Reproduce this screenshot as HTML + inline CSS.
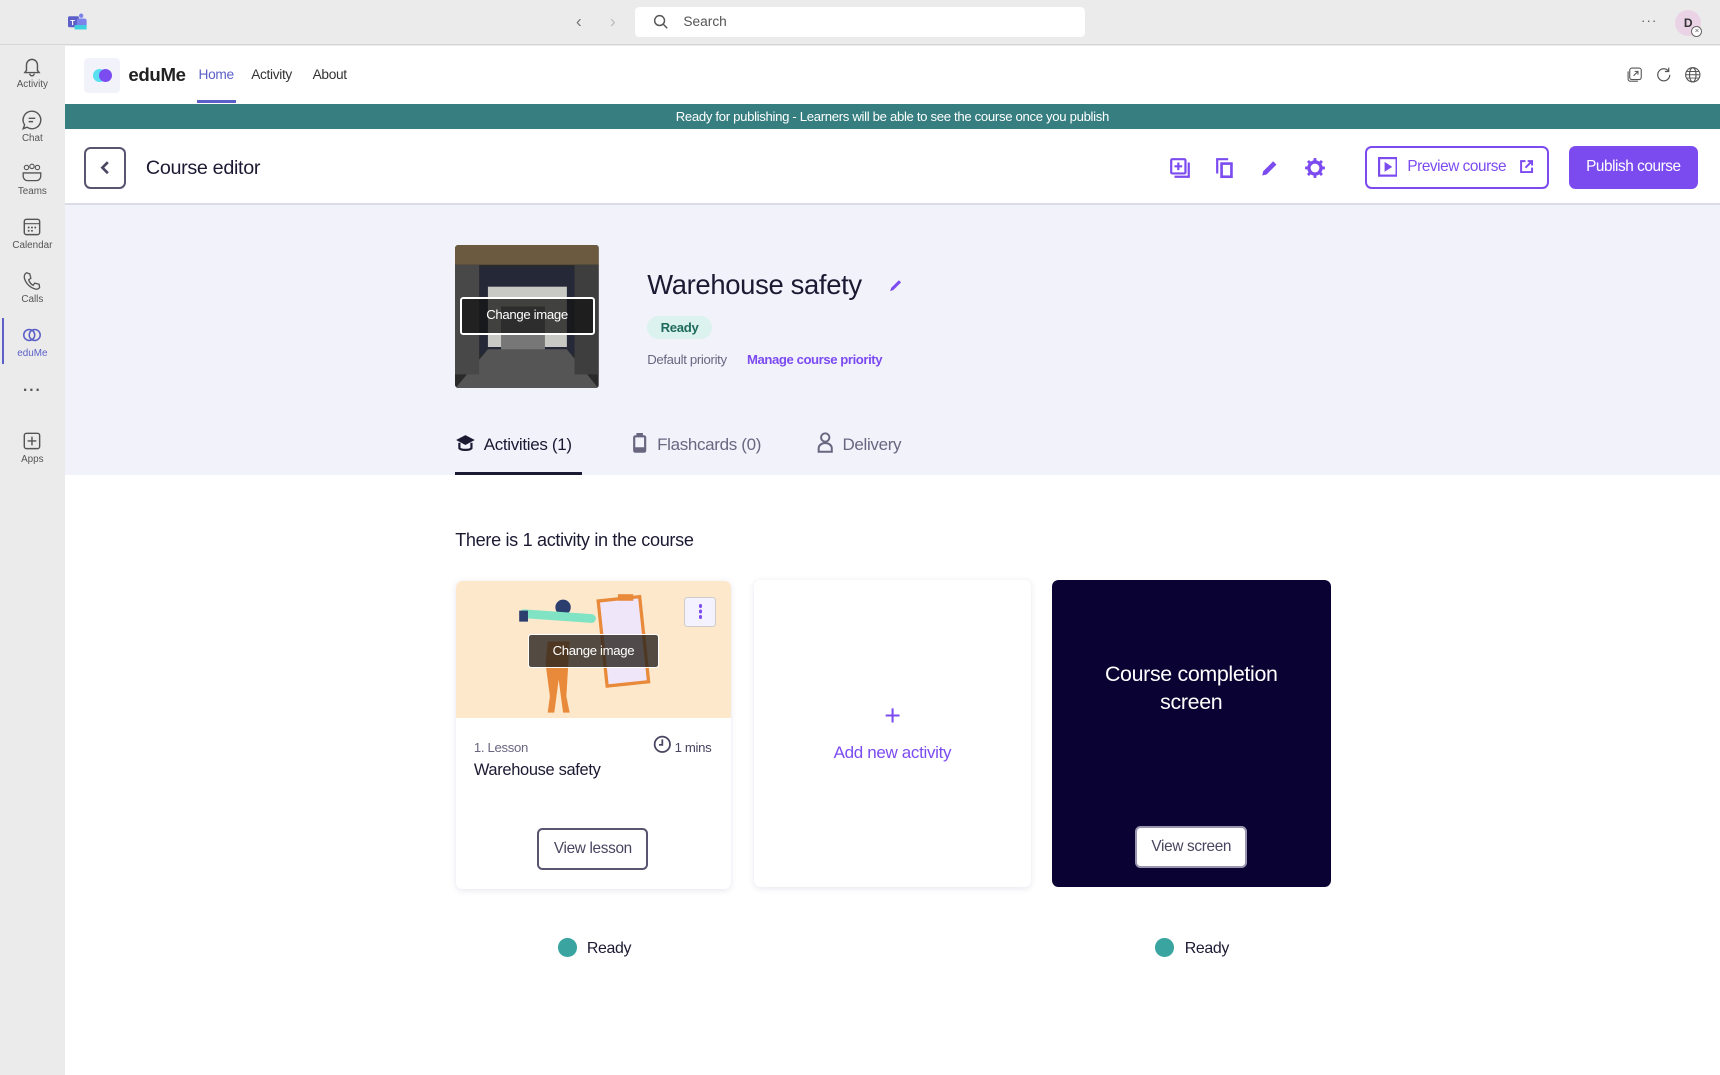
<!DOCTYPE html>
<html><head><meta charset="utf-8">
<style>
*{box-sizing:border-box;margin:0;padding:0}
html,body{width:1720px;height:1075px;overflow:hidden;background:#ebebeb}
#root{zoom:1.09694;width:1568px;height:980px;position:relative;font-family:"Liberation Sans",sans-serif;background:#ebebeb}
.abs{position:absolute}
.top{left:0;top:0;width:1568px;height:41px;background:#ebebeb;border-bottom:1px solid #d6d6d6}
.search{left:579px;top:6px;width:410px;height:28px;background:#fff;border-radius:4px;font-size:12.5px;color:#555;padding:7px 0 0 44px}
.rail{left:0;top:42px;width:59px;height:938px;background:#ebebeb}
.ri{position:absolute;left:0;width:59px;text-align:center;font-size:9px;color:#555}
.ri svg{display:block;margin:0 auto 2px}
.main{left:59px;top:42px;width:1509px;height:938px;background:#fff;letter-spacing:-0.3px}
.hdr{left:0;top:0;width:1509px;height:53px;background:#fff}
.banner{left:0;top:53px;width:1509px;height:23px;background:#367e80;color:#fff;font-size:12px;text-align:center;line-height:23px}
.edit{left:0;top:76px;width:1509px;height:69px;background:#fff;border-bottom:2px solid #dcdce6}
.gray{left:0;top:145px;width:1509px;height:246px;background:#f2f2fb}
.btn{border-radius:6px;font-size:14px;text-align:center}
.card{border-radius:6px;background:#fff;box-shadow:0 1px 6px rgba(60,60,120,.12)}
</style></head><body><div id="root">
<div class="abs top"></div>
<svg class="abs" style="left:62px;top:12px" width="18" height="16" viewBox="0 0 18 16"><rect x="0" y="3" width="10" height="10" rx="1.5" fill="#5b5fc7"/><rect x="8" y="5" width="9" height="8" rx="2" fill="#7b83eb"/><circle cx="12" cy="2.5" r="2" fill="#7b83eb"/><rect x="6" y="11" width="11" height="4" fill="#3fd0e0"/><text x="2" y="11" font-size="7" fill="#fff" font-family="Liberation Sans" font-weight="bold">T</text></svg>
<div class="abs" style="left:525px;top:10px;font-size:16px;color:#777">&#8249;</div>
<div class="abs" style="left:556px;top:10px;font-size:16px;color:#bbb">&#8250;</div>
<div class="abs search">Search</div>
<svg class="abs" style="left:595px;top:13px" width="14" height="14" viewBox="0 0 14 14"><circle cx="6" cy="6" r="4.5" fill="none" stroke="#555" stroke-width="1.3"/><path d="M9.5 9.5L13 13" stroke="#555" stroke-width="1.3"/></svg>
<div class="abs" style="left:1496px;top:12px;font-size:12px;color:#555;letter-spacing:1px">···</div>
<div class="abs" style="left:1527px;top:9px;width:24px;height:24px;border-radius:50%;background:#ebd3e6;font-size:11px;font-weight:bold;color:#333;text-align:center;line-height:24px">D</div>
<div class="abs" style="left:1542px;top:24px;width:10px;height:10px;border-radius:50%;background:#fff;border:1px solid #666;font-size:7px;line-height:8px;text-align:center;color:#555">×</div>
<div class="abs rail">
 <div class="ri" style="top:8px"><svg width="20" height="20" viewBox="0 0 20 20"><path d="M5 14V9a5 5 0 0110 0v5l1.5 2h-13z M8 17a2 2 0 004 0" fill="none" stroke="#555" stroke-width="1.3"/></svg>Activity</div>
 <div class="ri" style="top:57px"><svg width="20" height="20" viewBox="0 0 20 20"><path d="M10 2a8 8 0 11-4.5 14.6L2 18l1.3-3.5A8 8 0 0110 2z" fill="none" stroke="#555" stroke-width="1.3"/><path d="M7 8.5h6M7 11.5h4" stroke="#555" stroke-width="1.3"/></svg>Chat</div>
 <div class="ri" style="top:106px"><svg width="20" height="20" viewBox="0 0 20 20"><circle cx="5" cy="5" r="2" fill="none" stroke="#555"/><circle cx="10" cy="4" r="2" fill="none" stroke="#555"/><circle cx="15" cy="5" r="2" fill="none" stroke="#555"/><path d="M2 10h16v3a4 4 0 01-4 4H6a4 4 0 01-4-4z" fill="none" stroke="#555" stroke-width="1.2"/></svg>Teams</div>
 <div class="ri" style="top:155px"><svg width="20" height="20" viewBox="0 0 20 20"><rect x="3" y="3" width="14" height="14" rx="2" fill="none" stroke="#555" stroke-width="1.3"/><path d="M3 7h14" stroke="#555"/><circle cx="7" cy="10.5" r=".9" fill="#555"/><circle cx="10" cy="10.5" r=".9" fill="#555"/><circle cx="13" cy="10.5" r=".9" fill="#555"/><circle cx="7" cy="13.5" r=".9" fill="#555"/><circle cx="10" cy="13.5" r=".9" fill="#555"/></svg>Calendar</div>
 <div class="ri" style="top:204px"><svg width="20" height="20" viewBox="0 0 20 20"><path d="M5 2.5l3 1 1 4-2 1.5a9 9 0 004 5l1.5-2 4 1 .5 3c-1 1.5-3 2-5 1A14 14 0 013 7c-.3-2 .5-3.5 2-4.5z" fill="none" stroke="#555" stroke-width="1.2"/></svg>Calls</div>
 <div class="abs" style="left:2px;top:248px;width:2px;height:42px;background:#5b5fc7"></div>
 <div class="ri" style="top:253px;color:#5b5fc7"><svg width="20" height="20" viewBox="0 0 20 20"><circle cx="7.5" cy="10" r="5" fill="none" stroke="#5b5fc7" stroke-width="1.4"/><circle cx="12.5" cy="10" r="5" fill="none" stroke="#5b5fc7" stroke-width="1.4"/></svg>eduMe</div>
 <div class="ri" style="top:306px;font-size:14px;letter-spacing:1px;font-weight:bold">···</div>
 <div class="ri" style="top:350px"><svg width="20" height="20" viewBox="0 0 20 20"><rect x="3" y="3" width="14" height="14" rx="2" fill="none" stroke="#555" stroke-width="1.3"/><path d="M10 6v8M6 10h8" stroke="#555" stroke-width="1.3"/></svg>Apps</div>
</div>
<div class="abs main">
 <div class="abs hdr">
  <div class="abs" style="left:18px;top:11px;width:32px;height:32px;background:#f2f2fb;border-radius:4px"></div>
  <div class="abs" style="left:26px;top:21px;width:12px;height:12px;border-radius:50%;background:#58e0f0"></div>
  <div class="abs" style="left:31px;top:21px;width:12px;height:12px;border-radius:50%;background:#7b4cf0"></div>
  <div class="abs" style="left:58px;top:16px;font-size:17px;font-weight:bold;color:#222">eduMe</div>
  <div class="abs" style="left:122px;top:19px;font-size:12.5px;color:#5b5fc7">Home</div>
  <div class="abs" style="left:121px;top:49px;width:35px;height:3px;background:#5b5fc7"></div>
  <div class="abs" style="left:170px;top:19px;font-size:12.5px;color:#333">Activity</div>
  <div class="abs" style="left:226px;top:19px;font-size:12.5px;color:#333">About</div>
  <svg class="abs" style="left:1424px;top:19px" width="14" height="14" viewBox="0 0 14 14"><rect x="2.5" y="1" width="10.5" height="10.5" rx="2" fill="none" stroke="#555"/><path d="M1 4v7a2 2 0 002 2h7" fill="none" stroke="#555"/><path d="M6 8l4-4M7 4h3v3" fill="none" stroke="#555"/></svg>
  <svg class="abs" style="left:1450px;top:18px" width="16" height="16" viewBox="0 0 16 16"><path d="M13.5 8A5.5 5.5 0 118 2.5c2 0 3.5 1 4.5 2.5M12.5 1.5V5H9" fill="none" stroke="#555" stroke-width="1.1"/></svg>
  <svg class="abs" style="left:1476px;top:18px" width="16" height="16" viewBox="0 0 16 16"><circle cx="8" cy="8" r="6.5" fill="none" stroke="#555"/><ellipse cx="8" cy="8" rx="3" ry="6.5" fill="none" stroke="#555"/><path d="M1.5 8h13M2.5 5h11M2.5 11h11" stroke="#555" stroke-width=".9"/></svg>
 </div>
 <div class="abs banner">Ready for publishing - Learners will be able to see the course once you publish</div>
 <div class="abs edit">
  <div class="abs" style="left:18px;top:16px;width:38px;height:38px;border:2px solid #5a5470;border-radius:6px"></div>
  <svg class="abs" style="left:30px;top:28px" width="14" height="14" viewBox="0 0 14 14"><path d="M9 2L4 7l5 5" fill="none" stroke="#4a4460" stroke-width="2.4"/></svg>
  <div class="abs" style="left:74px;top:25px;font-size:18px;color:#1c1a33">Course editor</div>
  <svg class="abs" style="left:1007px;top:25px" width="20" height="20" viewBox="0 0 20 20"><rect x="2" y="2" width="13" height="13" rx="1" fill="none" stroke="#7c4bf0" stroke-width="2"/><path d="M8.5 5v7M5 8.5h7" stroke="#7c4bf0" stroke-width="2"/><path d="M18 5v13H5" fill="none" stroke="#7c4bf0" stroke-width="2"/></svg>
  <svg class="abs" style="left:1049px;top:25px" width="18" height="20" viewBox="0 0 18 20"><path d="M2 15V2h10" fill="none" stroke="#7c4bf0" stroke-width="2"/><rect x="6" y="6" width="9" height="12" fill="none" stroke="#7c4bf0" stroke-width="2.4"/></svg>
  <svg class="abs" style="left:1090px;top:26px" width="18" height="18" viewBox="0 0 18 18"><path d="M2 16l1-4 9-9 3 3-9 9z" fill="#7c4bf0"/></svg>
  <svg class="abs" style="left:1130px;top:25px" width="20" height="20" viewBox="0 0 20 20"><circle cx="10" cy="10" r="5.5" fill="none" stroke="#7c4bf0" stroke-width="3"/><path d="M10 1v3M10 16v3M1 10h3M16 10h3M3.6 3.6l2.1 2.1M14.3 14.3l2.1 2.1M3.6 16.4l2.1-2.1M14.3 5.7l2.1-2.1" stroke="#7c4bf0" stroke-width="2.6"/></svg>
  <div class="abs btn" style="left:1185px;top:15px;width:168px;height:39px;border:2px solid #7c4bf0"></div>
  <div class="abs" style="left:1224px;top:26px;width:100px;font-size:14px;color:#7c4bf0;letter-spacing:-0.4px;white-space:nowrap">Preview course</div>
  <svg class="abs" style="left:1197px;top:25px" width="18" height="18" viewBox="0 0 18 18"><rect x="1" y="1" width="16" height="16" fill="none" stroke="#7c4bf0" stroke-width="2"/><path d="M6 4.5v9l7-4.5z" fill="#7c4bf0"/></svg>
  <svg class="abs" style="left:1327px;top:28px" width="12" height="12" viewBox="0 0 12 12"><path d="M5 1H1v10h10V7" fill="none" stroke="#7c4bf0" stroke-width="1.8"/><path d="M5 7l6-6M7 1h4v4" fill="none" stroke="#7c4bf0" stroke-width="1.8"/></svg>
  <div class="abs btn" style="left:1371px;top:15px;width:118px;height:39px;background:#7c4bf0;color:#fff;padding-top:11px;letter-spacing:-0.4px">Publish course</div>
 </div>
 <div class="abs gray">
  <svg class="abs" style="left:356px;top:36px;border-radius:3px" width="131" height="131" viewBox="0 0 131 131"><rect width="131" height="131" fill="#2a2a2a"/><rect x="0" y="0" width="131" height="18" fill="#6b5a40"/><rect x="22" y="20" width="88" height="80" fill="#252836"/><rect x="30" y="38" width="72" height="55" fill="#c8c8c4"/><rect x="42" y="56" width="40" height="40" fill="#777"/><path d="M0 131L30 95h72l29 36z" fill="#555"/><rect x="0" y="18" width="22" height="100" fill="#484848"/><rect x="109" y="18" width="22" height="100" fill="#3e3e3e"/></svg>
  <div class="abs" style="left:360px;top:84px;width:123px;height:34px;border:2px solid #fff;border-radius:3px;background:rgba(20,20,20,.75);color:#fff;font-size:12px;text-align:center;line-height:30px">Change image</div>
  <div class="abs" style="left:531px;top:58px;font-size:25px;color:#1c1a33">Warehouse safety</div>
  <svg class="abs" style="left:751px;top:66px" width="13" height="13" viewBox="0 0 13 13"><path d="M1 12l1-3 7-7 2 2-7 7z" fill="#7c4bf0"/></svg>
  <div class="abs" style="left:531px;top:101px;width:59px;height:21px;border-radius:11px;background:#dcf2ee;color:#1e6a5c;font-size:12px;font-weight:bold;text-align:center;line-height:21px">Ready</div>
  <div class="abs" style="left:531px;top:134px;font-size:12px;color:#6a6680">Default priority</div>
  <div class="abs" style="left:622px;top:134px;font-size:12px;color:#7c4bf0;font-weight:bold;letter-spacing:-0.4px">Manage course priority</div>
  <svg class="abs" style="left:356px;top:209px" width="19" height="18" viewBox="0 0 19 18"><path d="M9.5 1L1 5.5l8.5 4.5L18 5.5z" fill="#1c1a33"/><path d="M4 8v5c1.5 2 9.5 2 11 0V8" fill="none" stroke="#1c1a33" stroke-width="2"/></svg>
  <div class="abs" style="left:382px;top:210px;font-size:15.5px;color:#1c1a33">Activities (1)</div>
  <div class="abs" style="left:356px;top:243px;width:116px;height:3px;background:#1c1a33"></div>
  <svg class="abs" style="left:517px;top:208px" width="14" height="19" viewBox="0 0 14 19"><rect x="1" y="2" width="12" height="16" rx="2" fill="#6a6680"/><rect x="3" y="4" width="8" height="9" fill="#f2f2fb"/><rect x="4" y="0" width="6" height="3" fill="#6a6680"/></svg>
  <div class="abs" style="left:540px;top:210px;font-size:15.5px;color:#6a6680">Flashcards (0)</div>
  <svg class="abs" style="left:686px;top:207px" width="15" height="19" viewBox="0 0 15 19"><circle cx="7.5" cy="5" r="3.8" fill="none" stroke="#6a6680" stroke-width="1.8"/><path d="M1.5 18v-3a6 5 0 0112 0v3z" fill="none" stroke="#6a6680" stroke-width="1.8"/></svg>
  <div class="abs" style="left:709px;top:210px;font-size:15.5px;color:#6a6680">Delivery</div>
 </div>
 <div class="abs" style="left:356px;top:441px;font-size:16.5px;color:#1c1a33">There is 1 activity in the course</div>
 <div class="abs card" style="left:357px;top:488px;width:250px;height:280px;overflow:hidden">
  <div class="abs" style="left:0;top:0;width:250px;height:125px;background:#fde8cc"></div>
  <svg class="abs" style="left:55px;top:10px" width="130" height="115" viewBox="0 0 130 115"><rect x="78" y="6" width="38" height="78" fill="#f0e6fa" stroke="#e88a3a" stroke-width="3" transform="rotate(-6 97 45)"/><rect x="92" y="2" width="14" height="6" fill="#e88a3a"/><path d="M28 45h20l-3 50 3 15h-6l-4-30-4 30h-6l2-15-4-30z" fill="#e88a3a"/><circle cx="42" cy="14" r="7" fill="#2c3e6e"/><rect x="2" y="18" width="70" height="8" rx="4" fill="#7fe3c4" transform="rotate(4 37 22)"/><rect x="2" y="17" width="8" height="10" fill="#2c3e6e"/></svg>
  <div class="abs" style="left:208px;top:14px;width:29px;height:28px;border:1px solid #ccc;border-radius:3px;background:#f4f2ff"></div>
  <div class="abs" style="left:221px;top:21px;width:3px;height:3px;border-radius:50%;background:#7c4bf0;box-shadow:0 5px 0 #7c4bf0,0 10px 0 #7c4bf0"></div>
  <div class="abs" style="left:65px;top:48px;width:120px;height:31px;border:1px solid #fff;border-radius:3px;background:rgba(40,35,30,.8);color:#fff;font-size:12px;text-align:center;line-height:29px">Change image</div>
  <div class="abs" style="left:16px;top:145px;font-size:12px;color:#6a6680">1. Lesson</div>
  <svg class="abs" style="left:179px;top:140px" width="17" height="17" viewBox="0 0 17 17"><circle cx="8.5" cy="8.5" r="7" fill="none" stroke="#4a4460" stroke-width="1.6"/><path d="M8.5 4v5h-3" fill="none" stroke="#4a4460" stroke-width="1.6"/></svg>
  <div class="abs" style="left:199px;top:145px;font-size:12px;color:#4a4460">1 mins</div>
  <div class="abs" style="left:16px;top:164px;font-size:15px;color:#1c1a33">Warehouse safety</div>
  <div class="abs" style="left:74px;top:225px;width:101px;height:38px;border:2px solid #5a5470;border-radius:5px;color:#4a4460;font-size:14px;text-align:center;line-height:34px">View lesson</div>
 </div>
 <div class="abs card" style="left:628px;top:487px;width:253px;height:280px"></div>
 <div class="abs" style="left:628px;top:598px;width:253px;text-align:center;font-size:26px;color:#7c4bf0;line-height:1">+</div>
 <div class="abs" style="left:628px;top:635px;width:253px;text-align:center;font-size:15.5px;color:#7c4bf0">Add new activity</div>
 <div class="abs" style="left:900px;top:487px;width:254px;height:280px;background:#0a0232;border-radius:6px"></div>
 <div class="abs" style="left:900px;top:561px;width:254px;text-align:center;font-size:19.5px;color:#fff;line-height:25px">Course completion<br>screen</div>
 <div class="abs" style="left:976px;top:711px;width:102px;height:38px;background:#fff;border:2px solid #9a96b0;border-radius:5px;color:#4a4460;font-size:14px;text-align:center;line-height:34px">View screen</div>
 <div class="abs" style="left:450px;top:813px;width:17px;height:17px;border-radius:50%;background:#3aa5a0"></div>
 <div class="abs" style="left:476px;top:815px;font-size:14.5px;color:#1c1a33">Ready</div>
 <div class="abs" style="left:994px;top:813px;width:17px;height:17px;border-radius:50%;background:#3aa5a0"></div>
 <div class="abs" style="left:1021px;top:815px;font-size:14.5px;color:#1c1a33">Ready</div>
</div>
</div></body></html>
